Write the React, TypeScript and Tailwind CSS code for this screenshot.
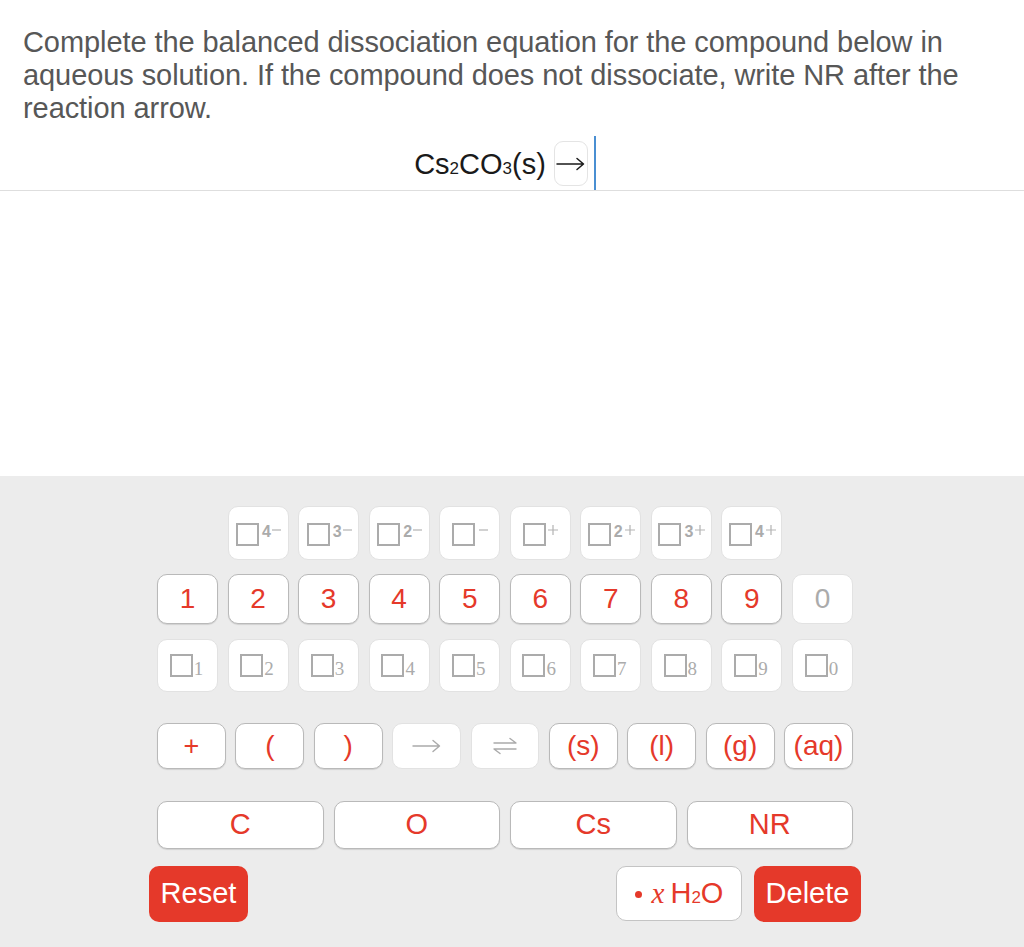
import React from "react";

function Key({
  children,
  w,
  h,
  on = true,
  extra = "",
}: {
  children: React.ReactNode;
  w: string;
  h: string;
  on?: boolean;
  extra?: string;
}) {
  return (
    <div
      className={`${w} ${h} flex items-center justify-center bg-white rounded-[10px] border ${
        on
          ? "border-[#b9b9b9] shadow-[0_1px_1px_rgba(0,0,0,0.12)] text-[#e5392a]"
          : "border-[#e2e2e2] text-[#ababab]"
      } ${extra}`}
    >
      {children}
    </div>
  );
}

function Box() {
  return <span className="block w-[23px] h-[23px] border-2 border-[#ababab]" />;
}

function Charge({ n, sign }: { n: string; sign: string }) {
  return (
    <Key w="w-[61px]" h="h-[54px]" on={false}>
      <div className="flex items-start mt-[3px] ml-[2px]">
        <Box />
        {n && <span className="text-[16px] font-bold leading-none ml-[3px] mt-[1px] text-[#ababab]">{n}</span>}
        {sign === "+" ? (
          <svg width="12" height="12" viewBox="0 0 12 12" className="ml-[1px] mt-[1px]">
            <path d="M1 6H11M6 1V11" stroke="#b3b3b3" strokeWidth="1.2" fill="none" />
          </svg>
        ) : (
          <svg width="10" height="12" viewBox="0 0 10 12" className={n ? "ml-[1px] mt-[1px]" : "ml-[4px] mt-[1px]"}>
            <path d="M0 6H9" stroke="#b3b3b3" strokeWidth="1.2" fill="none" />
          </svg>
        )}
      </div>
    </Key>
  );
}

function Sub({ n }: { n: string }) {
  return (
    <Key w="w-[61px]" h="h-[53px]" on={false}>
      <div className="flex items-end -ml-[2px]">
        <Box />
        <span
          className="text-[19px] leading-none ml-[1px] -mb-[1px]"
          style={{ fontFamily: '"Liberation Serif", serif' }}
        >
          {n}
        </span>
      </div>
    </Key>
  );
}

function RightArrow({ color, sw }: { color: string; sw: number }) {
  return (
    <svg width="29" height="14" viewBox="0 0 29 14">
      <path d="M1 7H27.5M21 1.5L27.5 7L21 12.5" stroke={color} strokeWidth={sw} fill="none" strokeLinecap="round" strokeLinejoin="round" />
    </svg>
  );
}

function Equil() {
  return (
    <svg width="26" height="18" viewBox="0 0 26 18">
      <path d="M2 6H24L18 1.5M24 12H2L8 16.5" stroke="#aaaaaa" strokeWidth="1.4" fill="none" strokeLinecap="round" strokeLinejoin="round" />
    </svg>
  );
}

export default function App() {
  const font = { fontFamily: '"Liberation Sans", Arial, sans-serif' };
  return (
    <div className="w-[1024px] h-[947px] bg-white flex flex-col overflow-hidden" style={font}>
      <div className="pt-[26px] px-[23px]">
        <p className="text-[29px] leading-[33px] text-[#575757] tracking-[-0.08px]">
          Complete the balanced dissociation equation for the compound below in aqueous solution. If the
          compound does not dissociate, write NR after the reaction arrow.
        </p>
      </div>
      <div className="pt-[11px] border-b border-[#dedede]">
        <div className="h-[54px] flex items-center justify-center pr-[14px]">
          <span className="text-[29px] text-[#1a1a1a] leading-none mt-[2px]">
            Cs<span className="text-[17px]">2</span>CO<span className="text-[17px]">3</span>(s)
          </span>
          <div className="ml-[8px] mt-[1px] w-[34px] h-[45px] rounded-[9px] border border-[#e4e4e4] flex items-center justify-center">
            <RightArrow color="#1a1a1a" sw={1.5} />
          </div>
          <div className="ml-[6px] w-[2px] h-[54px] bg-[#4a8fd2]" />
        </div>
      </div>
      <div className="flex-1" />
      <div className="h-[471px] bg-[#ececec] pl-[149px] pt-[30px]">
        <div className="ml-[8px] w-[696px]">
          <div className="grid grid-cols-10 gap-x-[9.5px]">
            <div />
            <Charge n="4" sign="-" />
            <Charge n="3" sign="-" />
            <Charge n="2" sign="-" />
            <Charge n="" sign="-" />
            <Charge n="" sign="+" />
            <Charge n="2" sign="+" />
            <Charge n="3" sign="+" />
            <Charge n="4" sign="+" />
          </div>
          <div className="grid grid-cols-10 gap-x-[9.5px] mt-[14px]">
            {["1", "2", "3", "4", "5", "6", "7", "8", "9"].map((d) => (
              <Key key={d} w="w-[61px]" h="h-[50px]" extra="text-[28px]">
                {d}
              </Key>
            ))}
            <Key w="w-[61px]" h="h-[50px]" on={false} extra="text-[28px]">
              0
            </Key>
          </div>
          <div className="grid grid-cols-10 gap-x-[9.5px] mt-[15px]">
            {["1", "2", "3", "4", "5", "6", "7", "8", "9", "0"].map((d) => (
              <Sub key={d} n={d} />
            ))}
          </div>
          <div className="flex gap-x-[9.4px] mt-[31px]">
            <Key w="w-[69px]" h="h-[46px]" extra="text-[27px]">+</Key>
            <Key w="w-[69px]" h="h-[46px]" extra="text-[28px]">(</Key>
            <Key w="w-[69px]" h="h-[46px]" extra="text-[28px]">)</Key>
            <Key w="w-[69px]" h="h-[46px]" on={false}>
              <RightArrow color="#aaaaaa" sw={1.4} />
            </Key>
            <Key w="w-[69px]" h="h-[46px]" on={false}>
              <Equil />
            </Key>
            <Key w="w-[69px]" h="h-[46px]" extra="text-[28px]">(s)</Key>
            <Key w="w-[69px]" h="h-[46px]" extra="text-[28px]">(l)</Key>
            <Key w="w-[69px]" h="h-[46px]" extra="text-[28px]">(g)</Key>
            <Key w="w-[69px]" h="h-[46px]" extra="text-[28px]">(aq)</Key>
          </div>
          <div className="flex gap-x-[10px] mt-[32px]">
            {["C", "O", "Cs", "NR"].map((e) => (
              <Key key={e} w="w-[167px]" h="h-[48px]" extra="text-[29px]">
                {e}
              </Key>
            ))}
          </div>
        </div>
        <div className="w-[712px] flex justify-between mt-[17px]">
          <div className="w-[99px] h-[56px] rounded-[10px] bg-[#e5392a] text-white text-[29px] flex items-center justify-center">
            Reset
          </div>
          <div className="flex gap-x-[12px]">
            <div className="w-[126px] h-[55px] rounded-[10px] bg-white border border-[#c4c4c4] text-[#e5392a] text-[29px] flex items-center justify-center">
              <span className="w-[7px] h-[7px] rounded-full bg-[#e5392a] mr-[10px] mt-[2px]" />
              <span className="italic mr-[6px]" style={{ fontFamily: '"Liberation Serif", serif' }}>
                x
              </span>
              <span>
                H<span className="text-[17px]">2</span>O
              </span>
            </div>
            <div className="w-[107px] h-[56px] rounded-[10px] bg-[#e5392a] text-white text-[29px] flex items-center justify-center">
              Delete
            </div>
          </div>
        </div>
      </div>
    </div>
  );
}
